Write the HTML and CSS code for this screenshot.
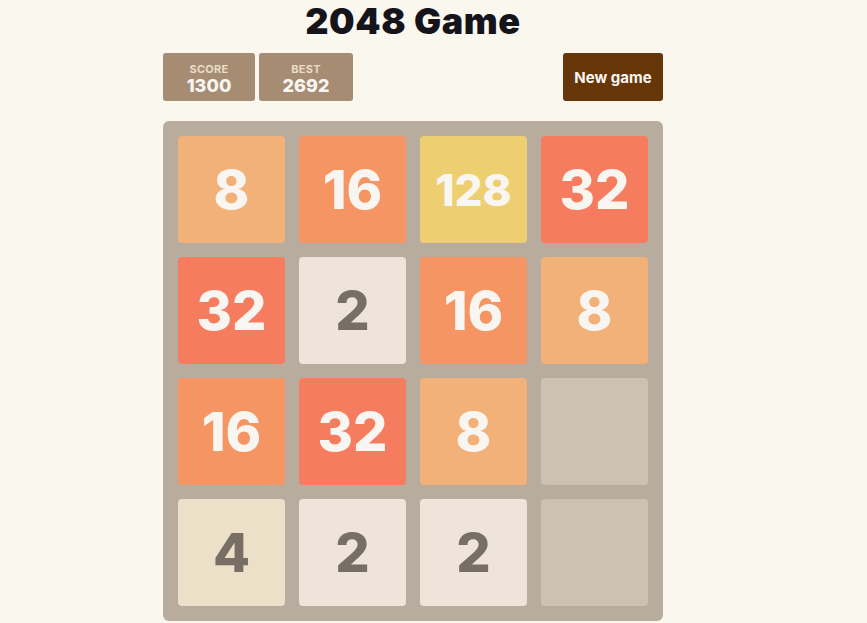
FILE: index.html
```html
<!DOCTYPE html>
<html>
<head>
<meta charset="utf-8">
<title>2048 Game</title>
<link rel="stylesheet" href="styles.css">
</head>
<body>
<main class="game">
  <h1 class="title">2048 Game</h1>
  <div class="toolbar">
    <div class="scores">
      <div class="score-box score"><span class="label">SCORE</span><span class="value">1300</span></div>
      <div class="score-box best"><span class="label">BEST</span><span class="value">2692</span></div>
    </div>
    <button class="new-game">New game</button>
  </div>
  <div class="board">
    <div class="tile t8">8</div>
    <div class="tile t16">16</div>
    <div class="tile t128">128</div>
    <div class="tile t32">32</div>

    <div class="tile t32">32</div>
    <div class="tile t2">2</div>
    <div class="tile t16">16</div>
    <div class="tile t8">8</div>

    <div class="tile t16">16</div>
    <div class="tile t32">32</div>
    <div class="tile t8">8</div>
    <div class="tile empty"></div>

    <div class="tile t4">4</div>
    <div class="tile t2">2</div>
    <div class="tile t2">2</div>
    <div class="tile empty"></div>
  </div>
</main>
</body>
</html>
```
FILE: styles.css
```css
html, body {
  margin: 0;
  padding: 0;
  background: #faf7ef;
}

body {
  font-family: "Inter", "DejaVu Sans", sans-serif;
}

.game {
  width: 500px;
  margin: 0 0 0 163px;
  padding-top: 1px;
}

.title {
  margin: 0;
  height: 40px;
  text-align: center;
  font-size: 36px;
  letter-spacing: 0.6px;
  line-height: 40px;
  font-weight: 900;
  color: #15141a;
}

.toolbar {
  margin-top: 12px;
  display: flex;
  justify-content: space-between;
  align-items: stretch;
  height: 48px;
}

.scores {
  display: flex;
  gap: 4px;
}

.score-box {
  display: flex;
  flex-direction: column;
  align-items: center;
  justify-content: center;
  padding-top: 4px;
  box-sizing: border-box;
  background: #a68c73;
  border-radius: 3px;
  color: #f9f6f2;
}

.score { width: 92px; }
.best { width: 94px; }

.label {
  font-size: 11px;
  font-weight: 700;
  color: #eadccb;
  line-height: 13px;
  letter-spacing: 0.3px;
}

.value {
  font-size: 18px;
  font-weight: 800;
  line-height: 20px;
}

.new-game {
  width: 100px;
  border: none;
  border-radius: 3px;
  background: #673608;
  color: #f9f6f2;
  font-family: inherit;
  font-size: 15px;
  font-weight: 700;
  cursor: pointer;
}

.board {
  margin-top: 20px;
  padding: 15px;
  background: #b8ac9f;
  border-radius: 6px;
  display: grid;
  grid-template-columns: repeat(4, 107px);
  grid-auto-rows: 107px;
  gap: 14px;
}

.tile {
  border-radius: 4px;
  display: flex;
  align-items: center;
  justify-content: center;
  font-size: 54px;
  font-weight: 800;
  color: #f9f6f2;
}

.empty { background: #cdc1b4; }
.t2 { background: #eee4da; color: #776e65; }
.t4 { background: #ede0c8; color: #776e65; }
.t8 { background: #f2b179; }
.t16 { background: #f59563; }
.t32 { background: #f67c5f; }
.t128 { background: #edcf72; font-size: 44px; }
```
